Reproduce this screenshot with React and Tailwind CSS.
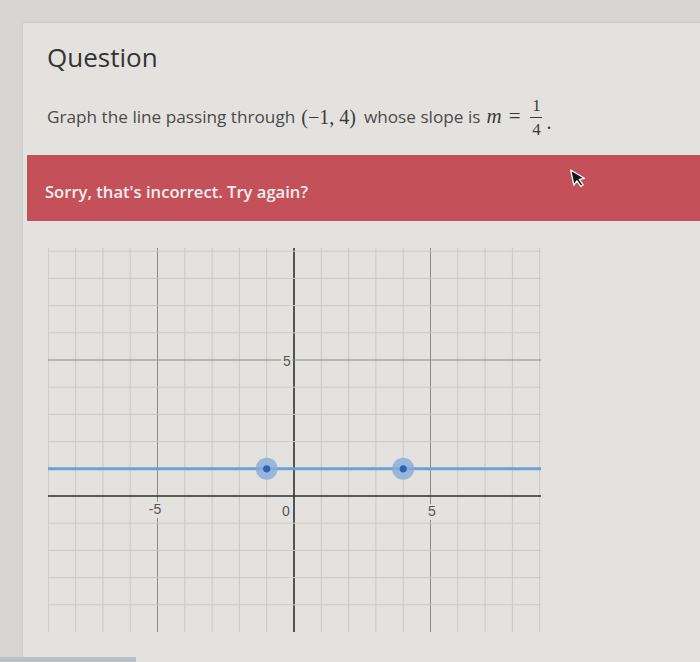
import React from "react";

const UX = 27.3;
const UY = 27.2;
const OX = 246;
const OY = 248;

function Graph() {
  const xs = [];
  for (let i = -9; i <= 9; i++) xs.push(i);
  const ys = [];
  for (let j = -4; j <= 9; j++) ys.push(j);

  return (
    <svg width="494" height="385" viewBox="0 0 494 385" className="block">
      {/* grid */}
      {xs.map((i) => (
        <line
          key={"v" + i}
          x1={OX + i * UX}
          y1={0}
          x2={OX + i * UX}
          y2={384}
          stroke={i === 0 ? "#2f2f2f" : Math.abs(i) === 5 ? "#8c8a87" : "#cbc9c5"}
          strokeWidth={i === 0 ? 1.6 : 1}
        />
      ))}
      {ys.map((j) => (
        <line
          key={"h" + j}
          x1={0}
          y1={OY - j * UY}
          x2={493}
          y2={OY - j * UY}
          stroke={j === 0 ? "#2f2f2f" : Math.abs(j) === 5 ? "#8c8a87" : "#cbc9c5"}
          strokeWidth={j === 0 ? 1.6 : 1}
        />
      ))}

      {/* labels */}
      <g fontFamily="'Liberation Sans', Arial, sans-serif" fontSize="14" fill="#555">
        <rect x={99} y={254} width={16} height={16} fill="#e4e2df" />
        <text x={107} y={266} textAnchor="middle">-5</text>
        <rect x={232} y={256} width={11} height={16} fill="#e4e2df" />
        <text x={238} y={268} textAnchor="middle">0</text>
        <rect x={378} y={256} width={11} height={16} fill="#e4e2df" />
        <text x={384} y={268} textAnchor="middle">5</text>
        <rect x={233} y={106} width={11} height={16} fill="#e4e2df" />
        <text x={239} y={118} textAnchor="middle">5</text>
      </g>

      {/* student line */}
      <line x1={0} y1={OY - UY} x2={493} y2={OY - UY} stroke="#6e9fd6" strokeWidth="3" />
      {[-1, 4].map((p) => (
        <g key={p}>
          <circle cx={OX + p * UX} cy={OY - UY} r="11" fill="#86acda" fillOpacity="0.8" />
          <circle cx={OX + p * UX} cy={OY - UY} r="3.6" fill="#2a65b5" />
        </g>
      ))}
    </svg>
  );
}

function Cursor() {
  return (
    <svg width="16" height="22" viewBox="0 0 16 22" className="absolute left-[571px] top-[167px] -rotate-12">
      <path
        d="M1.5 1.5 L1.5 17 L5.3 13.4 L8 19.6 L10.6 18.5 L8 12.4 L13.2 12.4 Z"
        fill="#151515"
        stroke="#ffffff"
        strokeWidth="1.3"
        strokeLinejoin="round"
      />
    </svg>
  );
}

export default function App() {
  return (
    <div className="relative w-[700px] h-[662px] overflow-hidden bg-[#d7d5d2] pt-[22px] pl-[22px] font-['Open_Sans',sans-serif]">
      <div className="h-[640px] bg-[#e4e2df] border-l border-t border-[#cdcbc8] pt-[16px]">
        <h1 className="pl-[24px] text-[26px] leading-[36px] text-[#343434]">Question</h1>

        <div className="mt-[22px] pl-[24px] h-[40px] flex items-center text-[17.2px] text-[#4a4a4a]">
          <span>Graph the line passing through</span>
          <span className="ml-[6px] font-['Liberation_Serif',serif] text-[20px] text-[#3a3a3a]">
            (−1,<span className="ml-[5px]">4</span>)
          </span>
          <span className="ml-[8px]">whose slope is</span>
          <span className="ml-[6px] font-['Liberation_Serif',serif] italic text-[21px] text-[#3a3a3a]">m</span>
          <span className="ml-[7px] font-['Liberation_Serif',serif] text-[21px] text-[#3a3a3a]">=</span>
          <span className="ml-[10px] inline-flex flex-col items-center font-['Liberation_Serif',serif] text-[17px] leading-[19px] text-[#3a3a3a]">
            <span>1</span>
            <span className="w-[12px] h-px bg-[#3a3a3a] my-[2px]" />
            <span>4</span>
          </span>
          <span className="ml-[4px] mt-[10px] font-['Liberation_Serif',serif] text-[20px] text-[#3a3a3a]">.</span>
        </div>

        <div className="mt-[18px] ml-[4px] h-[66px] bg-[#c4515a] flex items-center pl-[18px] pt-[8px]">
          <span className="text-[16.6px] font-semibold text-[#f6eeee]">Sorry, that's incorrect. Try again?</span>
        </div>

        <div className="mt-[27px] ml-[25px]">
          <Graph />
        </div>
      </div>

      <Cursor />
      <div className="absolute left-0 bottom-0 w-[136px] h-[5px] bg-[#b9c0ca]" />
    </div>
  );
}
